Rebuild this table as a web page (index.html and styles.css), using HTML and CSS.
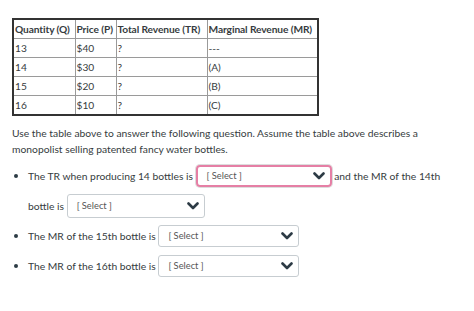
FILE: index.html
```html
<!DOCTYPE html>
<html>
<head>
<meta charset="utf-8">
<link rel="stylesheet" href="styles.css">
</head>
<body>
<div class="page">
  <table class="data">
    <colgroup><col class="c1"><col class="c2"><col class="c3"><col class="c4"></colgroup>
    <thead>
      <tr><th>Quantity (Q)</th><th>Price (P)</th><th>Total Revenue (TR)</th><th>Marginal Revenue (MR)</th></tr>
    </thead>
    <tbody>
      <tr><td>13</td><td>$40</td><td>?</td><td class="dash">---</td></tr>
      <tr><td>14</td><td>$30</td><td>?</td><td>(A)</td></tr>
      <tr><td>15</td><td>$20</td><td>?</td><td>(B)</td></tr>
      <tr><td>16</td><td>$10</td><td>?</td><td>(C)</td></tr>
    </tbody>
  </table>
  <p class="intro">Use the table above to answer the following question. Assume the table above describes a monopolist selling patented fancy water bottles.</p>
  <ul class="qs">
    <li><span>The TR when producing 14 bottles is</span> <span class="sel sel-a focus">[ Select ]<svg class="chev" viewBox="0 0 12 8"><path d="M1.5 1.5 L6 6 L10.5 1.5" fill="none" stroke="#2d3b45" stroke-width="2.6" stroke-linecap="round" stroke-linejoin="round"/></svg></span> <span>and the MR of the 14th</span><br><span>bottle is</span> <span class="sel sel-b">[ Select ]<svg class="chev" viewBox="0 0 12 8"><path d="M1.5 1.5 L6 6 L10.5 1.5" fill="none" stroke="#2d3b45" stroke-width="2.6" stroke-linecap="round" stroke-linejoin="round"/></svg></span></li>
    <li>The MR of the 15th bottle is <span class="sel sel-c">[ Select ]<svg class="chev" viewBox="0 0 12 8"><path d="M1.5 1.5 L6 6 L10.5 1.5" fill="none" stroke="#2d3b45" stroke-width="2.6" stroke-linecap="round" stroke-linejoin="round"/></svg></span></li>
    <li>The MR of the 16th bottle is <span class="sel sel-c">[ Select ]<svg class="chev" viewBox="0 0 12 8"><path d="M1.5 1.5 L6 6 L10.5 1.5" fill="none" stroke="#2d3b45" stroke-width="2.6" stroke-linecap="round" stroke-linejoin="round"/></svg></span></li>
  </ul>
</div>
</body>
</html>
```
FILE: styles.css
```css
html, body {
  margin: 0;
  padding: 0;
  background: #fff;
}
body {
  font-family: Lato, "Open Sans", sans-serif;
  color: #363c40;
  font-size: 10.3px;
}
.page {
  padding: 18px 12px 0 12px;
}
.data {
  border-collapse: collapse;
  border: 2px solid #333;
  font-size: 10.2px;
  width: 305px;
  table-layout: fixed;
}
.c1 { width: 62px; }
.c2 { width: 41px; }
.c3 { width: 91px; }
.c4 { width: 111px; }
.data th, .data td {
  border: 1px solid #9a9a9a;
  padding: 0 1px;
  height: 18px;
  text-align: left;
  white-space: nowrap;
  overflow: hidden;
  color: #363c40;
}
.data th {
  font-weight: bold;
  letter-spacing: -0.1px;
}
.dash { color: #888; }
.intro {
  margin: 9px 0 0 0;
  line-height: 16px;
}
.qs {
  margin: 4px 0 0 0;
  padding: 0 0 0 16px;
  list-style: none;
}
.qs li {
  position: relative;
  line-height: 30px;
  white-space: nowrap;
}
.qs li::before {
  content: "";
  position: absolute;
  left: -14px;
  top: 13px;
  width: 4px;
  height: 4px;
  border-radius: 50%;
  background: #2d3b45;
}
.sel {
  display: inline-flex;
  align-items: center;
  justify-content: space-between;
  box-sizing: border-box;
  height: 22px;
  padding: 0 5px 0 9px;
  border: 1px solid #c7cdd1;
  border-radius: 3px;
  font-size: 9.3px;
  color: #555;
  vertical-align: middle;
  line-height: 1;
  margin-top: -3px;
}
.sel-a { width: 136px; height: 22px; }
.sel-b { width: 138px; height: 24px; }
.sel-c { width: 141px; }
.focus {
  border: 2px solid #e57fa5;
  border-radius: 4px;
  box-shadow: 0 0 0 1px #ddd;
}
.chev {
  width: 12px;
  height: 8px;
}
```
